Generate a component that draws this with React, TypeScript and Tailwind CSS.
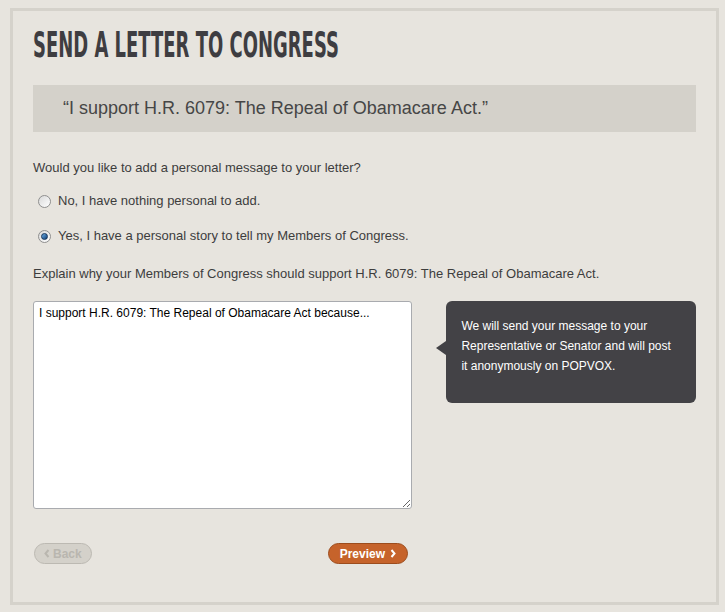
import React, { useState } from "react";

const Radio = ({ checked }: { checked: boolean }) => (
  <span className="relative inline-flex h-[13px] w-[13px] shrink-0 items-center justify-center rounded-full border border-[#8f8f8f] bg-gradient-to-br from-[#d9d9d9] to-[#ffffff]">
    {checked && (
      <span className="h-[7px] w-[7px] rounded-full bg-gradient-to-br from-[#6fb0e8] to-[#0b3d75] border border-[#13325a]" />
    )}
  </span>
);

const App = () => {
  const [personal, setPersonal] = useState(true);
  const [message, setMessage] = useState(
    "I support H.R. 6079: The Repeal of Obamacare Act because..."
  );

  return (
    <div className="min-h-screen bg-[#e7e4de] pt-[8px] pl-[10px] font-['Liberation_Sans',Arial,sans-serif]">
      <div className="w-[709px] h-[597px] border-[3px] border-[#d5d2cb] px-5">
        <h1 className="mt-[14px] h-[40px] origin-left scale-x-[0.555] whitespace-nowrap font-['Liberation_Sans_Narrow','DejaVu_Sans_Condensed',sans-serif] text-[36px] font-bold leading-[40px] text-[#3e3d41]">
          SEND A LETTER TO CONGRESS
        </h1>

        <div className="mt-[20px] h-[47px] bg-[#d4d1ca] pl-[30px] text-[18px] leading-[47px] text-[#464646]">
          “I support H.R. 6079: The Repeal of Obamacare Act.”
        </div>

        <p className="mt-[28px] text-[13px] leading-[16px] text-[#3d3d3d]">
          Would you like to add a personal message to your letter?
        </p>

        <div className="mt-[17px] flex flex-col gap-[19px] pl-[5px] text-[13px] leading-[16px] text-[#3d3d3d]">
          <label className="flex cursor-pointer items-center gap-[7px]" onClick={() => setPersonal(false)}>
            <Radio checked={!personal} />
            <span>No, I have nothing personal to add.</span>
          </label>
          <label className="flex cursor-pointer items-center gap-[7px]" onClick={() => setPersonal(true)}>
            <Radio checked={personal} />
            <span>Yes, I have a personal story to tell my Members of Congress.</span>
          </label>
        </div>

        <p className="mt-[22px] text-[13px] leading-[16px] text-[#3d3d3d]">
          Explain why your Members of Congress should support H.R. 6079: The Repeal of Obamacare Act.
        </p>

        <div className="mt-[19px] flex items-start gap-[34px]">
          <textarea
            value={message}
            onChange={(e) => setMessage(e.target.value)}
            className="h-[208px] w-[380px] resize-y rounded-[3px] border border-[#a9abaf] bg-white px-[5px] py-[4px] text-[12px] leading-[15px] text-black outline-none"
          />
          <div className="relative w-[250px] h-[102px] rounded-[6px] bg-[#434246] px-[15px] pt-[15px] text-[12px] leading-[20px] text-white whitespace-nowrap">
            <span className="absolute left-[-10px] top-[40px] h-0 w-0 border-y-[7px] border-r-[10px] border-y-transparent border-r-[#434246]" />
            We will send your message to your
            <br />
            Representative or Senator and will post
            <br />
            it anonymously on POPVOX.
          </div>
        </div>

        <div className="mt-[34px] flex w-[375px] items-center justify-between pl-[1px]">
          <button className="flex h-[21px] items-center gap-[3px] rounded-full border border-[#bcb9b2] bg-[#d4d1ca] px-[9px] text-[12px] font-bold text-[#b9b6af]">
            <svg width="6" height="9" viewBox="0 0 6 9" fill="none">
              <path d="M4.5 1L1.5 4.5L4.5 8" stroke="currentColor" strokeWidth="2" />
            </svg>
            Back
          </button>
          <button className="flex h-[21px] items-center gap-[5px] rounded-full border border-[#9c4c1d] bg-[#c6632b] px-[11px] text-[12px] font-bold text-white">
            Preview
            <svg width="6" height="9" viewBox="0 0 6 9" fill="none">
              <path d="M1.5 1L4.5 4.5L1.5 8" stroke="currentColor" strokeWidth="2" />
            </svg>
          </button>
        </div>
      </div>
    </div>
  );
};

export default App;
